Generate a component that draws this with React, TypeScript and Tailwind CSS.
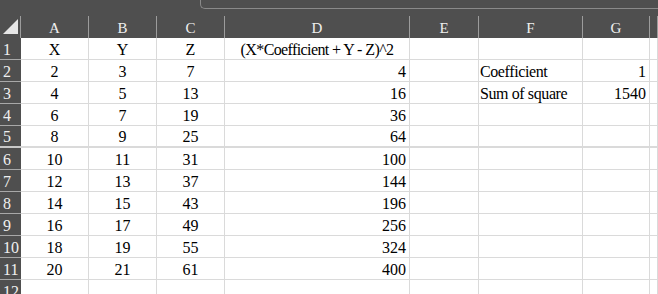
import React from 'react';

const COLS = ['A', 'B', 'C', 'D', 'E', 'F', 'G', ''];

// each row: [A, B, C, D, F, G]
const ROWS: (string | number)[][] = [
  ['X', 'Y', 'Z', '(X*Coefficient + Y - Z)^2', '', ''],
  [2, 3, 7, 4, 'Coefficient', 1],
  [4, 5, 13, 16, 'Sum of square', 1540],
  [6, 7, 19, 36, '', ''],
  [8, 9, 25, 64, '', ''],
  [10, 11, 31, 100, '', ''],
  [12, 13, 37, 144, '', ''],
  [14, 15, 43, 196, '', ''],
  [16, 17, 49, 256, '', ''],
  [18, 19, 55, 324, '', ''],
  [20, 21, 61, 400, '', ''],
  ['', '', '', '', '', ''],
];

const gridCols = 'grid grid-cols-[21px_68px_68px_68px_185px_69px_104px_67px_1fr]';

export default function App() {
  return (
    <div className="w-[658px] h-[294px] overflow-hidden bg-[#4f4f4f] text-black font-['Liberation_Serif','Times_New_Roman',serif]">
      {/* formula bar strip */}
      <div className="flex h-[16px]">
        <div className="w-[200px]" />
        <div className="flex-1 h-[9px] border-l border-b border-[#8a8a8a] rounded-bl-[5px]" />
      </div>

      {/* column headers */}
      <div className={`${gridCols} h-[22px]`}>
        <div className="relative border-r border-[#9c9c9c]">
          <svg width="15" height="15" viewBox="0 0 15 15" className="absolute left-[3px] top-[3px]">
            <polygon points="15,0 15,15 0,15" fill="#e6e6e6" />
          </svg>
        </div>
        {COLS.map((c, i) => (
          <div
            key={i}
            className="border-r border-[#9c9c9c] flex items-end justify-center pb-[1px] text-[15px] leading-[18px] text-[#efefef]"
          >
            {c}
          </div>
        ))}
      </div>

      {/* body rows */}
      {ROWS.map((r, ri) => (
        <div key={ri} className={`${gridCols} h-[22px]`}>
          <div
            className={`bg-[#4f4f4f] text-[#efefef] text-[16px] leading-[18px] pl-[3px] flex items-end ${
              ri === 4 ? 'border-b-2 border-[#c8c8c8]' : 'border-b border-[#a8a8a8]'
            }`}
          >
            {ri + 1}
          </div>
          {[0, 1, 2].map((ci) => (
            <Cell key={ci} value={r[ci]} align="center" thick={ri === 4} />
          ))}
          <Cell
            value={r[3]}
            align={ri === 0 ? 'center' : 'right'}
            thick={ri === 4}
            track={ri === 0 ? 'tracking-[-0.6px]' : ''}
          />
          <Cell value="" align="left" thick={ri === 4} />
          <Cell value={r[4]} align="left" thick={ri === 4} track="tracking-[-0.4px]" />
          <Cell value={r[5]} align="right" thick={ri === 4} />
          <Cell value="" align="left" thick={ri === 4} />
        </div>
      ))}
    </div>
  );
}

const Cell = ({
  value,
  align,
  thick,
  track = '',
}: {
  value: string | number;
  align: 'left' | 'center' | 'right';
  thick?: boolean;
  track?: string;
}) => (
  <div
    className={`bg-white border-r border-[#dadada] ${
      thick ? 'border-b-2' : 'border-b'
    } border-b-[#dadada] flex items-end whitespace-nowrap overflow-hidden text-[16px] leading-[18px] ${track} ${
      align === 'center' ? 'justify-center' : align === 'right' ? 'justify-end pr-[3px]' : 'justify-start pl-[1px]'
    }`}
  >
    {value}
  </div>
);
